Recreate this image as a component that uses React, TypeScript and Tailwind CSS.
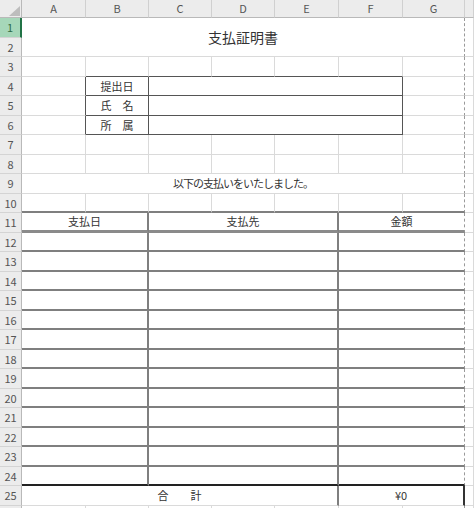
import type { ReactNode } from 'react';

// gridline / border presets (kept as full class strings so Tailwind picks them up)
const GRID_R = 'border-r border-r-[#dadada]';
const GRID_B = 'border-b border-b-[#dadada]';
const PAGE_R = 'border-r border-r-[#9a9a9a] ![border-right-style:dashed]';
const BOX_R = 'border-r border-r-[#555555]';
const BOX_B = 'border-b border-b-[#555555]';
const TBL_R = 'border-r-2 border-r-[#7f7f7f]';
const TBL_B = 'border-b-2 border-b-[#7f7f7f]';
const HEAD_B = 'border-b-[3px] border-b-[#8a8a8a]';
const LAST_B = 'border-b-2 border-b-[#222222]';

const COLS: { id: string; w: string }[] = [
  { id: 'A', w: 'w-[64px]' },
  { id: 'B', w: 'w-[63px]' },
  { id: 'C', w: 'w-[63px]' },
  { id: 'D', w: 'w-[63px]' },
  { id: 'E', w: 'w-[64px]' },
  { id: 'F', w: 'w-[64px]' },
  { id: 'G', w: 'w-[62px]' },
  { id: 'H', w: 'w-[9px]' },
];

const rowH = (n: number) => (n % 2 === 1 ? 'h-[20px]' : 'h-[19px]');

function Cell({
  w, r = GRID_R, b = GRID_B, text = 'text-[11px]', children,
}: { w: string; r?: string; b?: string; text?: string; children?: ReactNode }) {
  return (
    <div className={`${w} ${r} ${b} ${text} h-full shrink-0 flex items-center justify-center text-[#333] whitespace-nowrap`}>
      {children}
    </div>
  );
}

function Row({ h, children }: { h: string; children: ReactNode }) {
  return <div className={`flex ${h}`}>{children}</div>;
}

// a plain row of empty cells, G carries the page break
function Plain({ n, b }: { n: number; b?: string }) {
  return (
    <Row h={rowH(n)}>
      {COLS.map((c) => (
        <Cell
          key={c.id}
          w={c.w}
          r={c.id === 'G' ? PAGE_R : GRID_R}
          b={c.id === 'H' ? GRID_B : b ?? GRID_B}
        />
      ))}
    </Row>
  );
}

function InfoRow({ n, label }: { n: number; label: string }) {
  return (
    <Row h={rowH(n)}>
      <Cell w="w-[64px]" r={BOX_R} />
      <Cell w="w-[63px]" r={BOX_R} b={BOX_B}>{label}</Cell>
      <Cell w="w-[254px]" r={BOX_R} b={BOX_B} />
      <Cell w="w-[62px]" r={PAGE_R} />
      <Cell w="w-[9px]" />
    </Row>
  );
}

function PayRow({ n, last }: { n: number; last?: boolean }) {
  const b = last ? LAST_B : TBL_B;
  return (
    <Row h={rowH(n)}>
      <Cell w="w-[127px]" r={TBL_R} b={b} />
      <Cell w="w-[190px]" r={TBL_R} b={b} />
      <Cell w="w-[126px]" r={PAGE_R} b={b} />
      <Cell w="w-[9px]" />
    </Row>
  );
}

export default function App() {
  const rows = Array.from({ length: 26 }, (_, i) => i + 1);
  const payRows = Array.from({ length: 13 }, (_, i) => i + 12);

  return (
    <div className="w-[474px] h-[508px] overflow-hidden bg-white font-['Noto_Sans_CJK_JP','Noto_Sans',sans-serif]">
      {/* column headers */}
      <div className="flex h-[18px]">
        <div className="w-[22px] shrink-0 h-full flex items-end justify-end pr-[1px] pb-[1px] bg-[#ececec] border-r border-r-[#b9b9b9] border-b border-b-[#b9b9b9]">
          <svg width="11" height="10" viewBox="0 0 11 10">
            <polygon points="0,10 11,10 11,0" fill="#bdbdbd" />
          </svg>
        </div>
        {COLS.map((c) => (
          <div
            key={c.id}
            className={`${c.w} shrink-0 h-full flex items-center justify-center bg-[#ececec] border-r border-r-[#d0d0d0] border-b border-b-[#b9b9b9] text-[11px] text-[#555]`}
          >
            {c.id === 'H' ? '' : c.id}
          </div>
        ))}
      </div>

      <div className="flex">
        {/* row headers */}
        <div className="flex flex-col w-[22px] shrink-0">
          {rows.map((n) => (
            <div
              key={n}
              className={`${rowH(n)} flex items-center justify-center border-b border-b-[#d4d4d4] text-[11px] ${
                n === 1
                  ? 'bg-[#a6d7b9] text-[#2f6b47] border-r-2 border-r-[#217346]'
                  : 'bg-[#ececec] text-[#555] border-r border-r-[#b9b9b9]'
              }`}
            >
              {n < 26 ? n : ''}
            </div>
          ))}
        </div>

        {/* sheet */}
        <div className="flex flex-col">
          <Row h="h-[39px]">
            <Cell w="w-[443px]" r={PAGE_R} text="text-[14px]">支払証明書</Cell>
            <Cell w="w-[9px]" />
          </Row>

          <Row h={rowH(3)}>
            <Cell w="w-[64px]" />
            <Cell w="w-[63px]" b={BOX_B} />
            <Cell w="w-[63px]" b={BOX_B} />
            <Cell w="w-[63px]" b={BOX_B} />
            <Cell w="w-[64px]" b={BOX_B} />
            <Cell w="w-[64px]" b={BOX_B} />
            <Cell w="w-[62px]" r={PAGE_R} />
            <Cell w="w-[9px]" />
          </Row>

          <InfoRow n={4} label="提出日" />
          <InfoRow n={5} label="氏　名" />
          <InfoRow n={6} label="所　属" />

          <Plain n={7} />
          <Plain n={8} />

          <Row h={rowH(9)}>
            <Cell w="w-[443px]" r={PAGE_R} text="text-[11px] tracking-[-1px]">以下の支払いをいたしました。</Cell>
            <Cell w="w-[9px]" />
          </Row>

          <Plain n={10} b={TBL_B} />

          <Row h={rowH(11)}>
            <Cell w="w-[127px]" r={TBL_R} b={HEAD_B}>支払日</Cell>
            <Cell w="w-[190px]" r={TBL_R} b={HEAD_B}>支払先</Cell>
            <Cell w="w-[126px]" r={PAGE_R} b={HEAD_B}>金額</Cell>
            <Cell w="w-[9px]" />
          </Row>

          {payRows.map((n) => (
            <PayRow key={n} n={n} last={n === 24} />
          ))}

          <Row h={rowH(25)}>
            <Cell w="w-[317px]" r={TBL_R}>合　　計</Cell>
            <Cell w="w-[126px]" r="border-r-2 border-r-[#333333]">¥0</Cell>
            <Cell w="w-[9px]" />
          </Row>

          <Plain n={26} />
        </div>
      </div>
    </div>
  );
}
